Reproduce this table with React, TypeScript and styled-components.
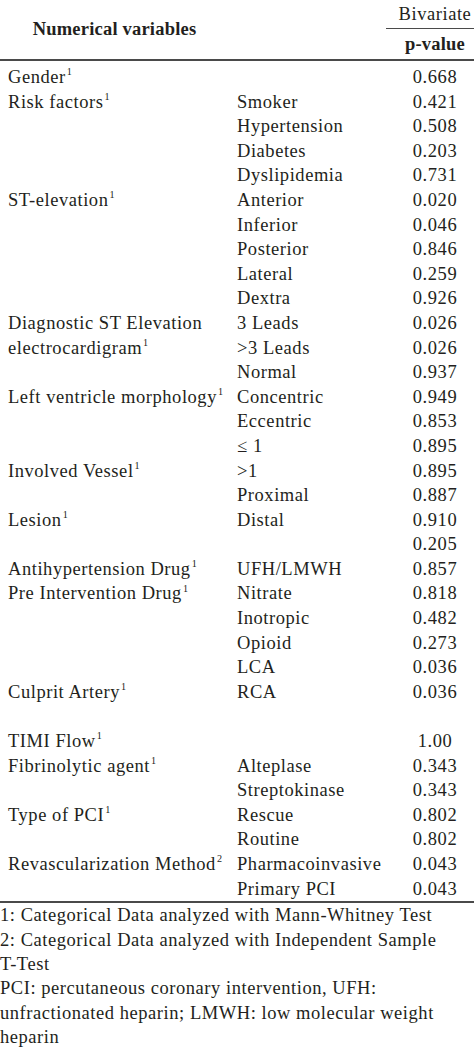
import React from "react";
import styled, { createGlobalStyle } from "styled-components";

const GlobalStyle = createGlobalStyle`
  html, body {
    margin: 0;
    padding: 0;
    background: #ffffff;
    overflow: hidden;
  }
  body {
    font-family: "Liberation Serif", "Times New Roman", serif;
    color: #231f20;
    letter-spacing: 0.55px;
  }
`;

const Page = styled.div`
  width: 484px;
`;

const Head = styled.div`
  display: grid;
  grid-template-columns: 386px 98px;
  border-bottom: 2px solid #4a4a4a;
`;

const HeadTitle = styled.div`
  display: flex;
  align-items: center;
  justify-content: center;
  width: 229px;
  font-size: 18.5px;
  font-weight: bold;
  letter-spacing: 0.2px;
`;

const HeadGroup = styled.div`
  display: flex;
  flex-direction: column;
`;

const HeadCell = styled.div<{ $bold?: boolean; $rule?: boolean }>`
  height: ${(p) => (p.$rule ? "28px" : "30px")};
  display: flex;
  align-items: center;
  justify-content: center;
  font-size: 18.5px;
  font-weight: ${(p) => (p.$bold ? "bold" : "normal")};
  letter-spacing: ${(p) => (p.$bold ? "0.2px" : "0.55px")};
  border-bottom: ${(p) => (p.$rule ? "1.5px solid #4a4a4a" : "none")};
`;

const Body = styled.div`
  padding-top: 4px;
  border-bottom: 2px solid #4a4a4a;
`;

const Row = styled.div`
  display: grid;
  grid-template-columns: 229px 157px 98px;
  height: 24.6px;
  align-items: center;
  font-size: 18.5px;
  line-height: 24.6px;
  white-space: nowrap;
`;

const Label = styled.div`
  padding-left: 8px;
`;

const Category = styled.div`
  padding-left: 8px;
`;

const Value = styled.div`
  text-align: center;
`;

const Sup = styled.sup`
  font-size: 0.55em;
  line-height: 0;
  vertical-align: 0.75em;
  margin-left: 1px;
`;

const Notes = styled.div`
  width: 474px;
  font-size: 18.5px;
  line-height: 24.4px;
`;

const Note = styled.p`
  margin: 0;
`;

const NoBreak = styled.span`
  white-space: nowrap;
`;

type Item = { label?: string; sup?: string; category?: string; value?: string };

const rows: Item[] = [
  { label: "Gender", sup: "1", value: "0.668" },
  { label: "Risk factors", sup: "1", category: "Smoker", value: "0.421" },
  { category: "Hypertension", value: "0.508" },
  { category: "Diabetes", value: "0.203" },
  { category: "Dyslipidemia", value: "0.731" },
  { label: "ST-elevation", sup: "1", category: "Anterior", value: "0.020" },
  { category: "Inferior", value: "0.046" },
  { category: "Posterior", value: "0.846" },
  { category: "Lateral", value: "0.259" },
  { category: "Dextra", value: "0.926" },
  { label: "Diagnostic ST Elevation", category: "3 Leads", value: "0.026" },
  { label: "electrocardigram", sup: "1", category: ">3 Leads", value: "0.026" },
  { category: "Normal", value: "0.937" },
  { label: "Left ventricle morphology", sup: "1", category: "Concentric", value: "0.949" },
  { category: "Eccentric", value: "0.853" },
  { category: "≤ 1", value: "0.895" },
  { label: "Involved Vessel", sup: "1", category: ">1", value: "0.895" },
  { category: "Proximal", value: "0.887" },
  { label: "Lesion", sup: "1", category: "Distal", value: "0.910" },
  { value: "0.205" },
  { label: "Antihypertension Drug", sup: "1", category: "UFH/LMWH", value: "0.857" },
  { label: "Pre Intervention Drug", sup: "1", category: "Nitrate", value: "0.818" },
  { category: "Inotropic", value: "0.482" },
  { category: "Opioid", value: "0.273" },
  { category: "LCA", value: "0.036" },
  { label: "Culprit Artery", sup: "1", category: "RCA", value: "0.036" },
  {},
  { label: "TIMI Flow", sup: "1", value: "1.00" },
  { label: "Fibrinolytic agent", sup: "1", category: "Alteplase", value: "0.343" },
  { category: "Streptokinase", value: "0.343" },
  { label: "Type of PCI", sup: "1", category: "Rescue", value: "0.802" },
  { category: "Routine", value: "0.802" },
  { label: "Revascularization Method", sup: "2", category: "Pharmacoinvasive", value: "0.043" },
  { category: "Primary PCI", value: "0.043" },
];

const App: React.FC = () => (
  <>
    <GlobalStyle />
    <Page>
      <Head>
        <HeadTitle>Numerical variables</HeadTitle>
        <HeadGroup>
          <HeadCell $rule>Bivariate</HeadCell>
          <HeadCell $bold>p-value</HeadCell>
        </HeadGroup>
      </Head>
      <Body>
        {rows.map((r, i) => (
          <Row key={i}>
            <Label>
              {r.label}
              {r.sup && <Sup>{r.sup}</Sup>}
            </Label>
            <Category>{r.category}</Category>
            <Value>{r.value}</Value>
          </Row>
        ))}
      </Body>
      <Notes>
        <Note>1: Categorical Data analyzed with Mann-Whitney Test</Note>
        <Note>
          2: Categorical Data analyzed with Independent Sample <NoBreak>T-Test</NoBreak>
        </Note>
        <Note>
          PCI: percutaneous coronary intervention, UFH: unfractionated heparin;
          LMWH: low molecular weight heparin
        </Note>
      </Notes>
    </Page>
  </>
);

export default App;
